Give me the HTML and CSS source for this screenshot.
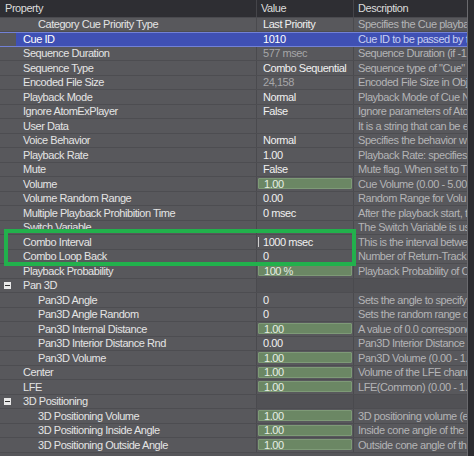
FILE: index.html
```html
<!DOCTYPE html>
<html lang="en">
<head>
    <meta charset="UTF-8">
    <title>Cue Properties</title>
    <link rel="stylesheet" href="styles.css">
</head>
<body>
    <div id="grid">
        <div id="table">
            <!-- Header -->
            <div class="head">
                <div class="h-prop">Property</div>
                <div class="h-val">Value</div>
                <div class="h-desc">Description</div>
            </div>

            <div class="row"><div class="gut"></div><div class="prop sub">Category Cue Priority Type</div><div class="val">Last Priority</div><div class="desc">Specifies the Cue playba</div></div>
            <div class="row sel"><div class="gut"></div><div class="prop">Cue ID</div><div class="val">1010</div><div class="desc">Cue ID to be passed by th</div></div>
            <div class="row"><div class="gut"></div><div class="prop">Sequence Duration</div><div class="val ro">577 msec</div><div class="desc">Sequence Duration (if -1</div></div>
            <div class="row"><div class="gut"></div><div class="prop">Sequence Type</div><div class="val">Combo Sequential</div><div class="desc">Sequence type of "Cue" o</div></div>
            <div class="row"><div class="gut"></div><div class="prop">Encoded File Size</div><div class="val ro">24,158</div><div class="desc">Encoded File Size in Obj</div></div>
            <div class="row"><div class="gut"></div><div class="prop">Playback Mode</div><div class="val">Normal</div><div class="desc">Playback Mode of Cue N</div></div>
            <div class="row"><div class="gut"></div><div class="prop">Ignore AtomExPlayer</div><div class="val">False</div><div class="desc">Ignore parameters of Ato</div></div>
            <div class="row"><div class="gut"></div><div class="prop">User Data</div><div class="val"></div><div class="desc">It is a string that can be e</div></div>
            <div class="row"><div class="gut"></div><div class="prop">Voice Behavior</div><div class="val">Normal</div><div class="desc">Specifies the behavior w</div></div>
            <div class="row"><div class="gut"></div><div class="prop">Playback Rate</div><div class="val">1.00</div><div class="desc">Playback Rate: specifies</div></div>
            <div class="row"><div class="gut"></div><div class="prop">Mute</div><div class="val">False</div><div class="desc">Mute flag. When set to Tr</div></div>
            <div class="row"><div class="gut"></div><div class="prop">Volume</div><div class="val"><span class="bar">1.00</span></div><div class="desc">Cue Volume (0.00 - 5.00</div></div>
            <div class="row"><div class="gut"></div><div class="prop">Volume Random Range</div><div class="val">0.00</div><div class="desc">Random Range for Volu</div></div>
            <div class="row"><div class="gut"></div><div class="prop">Multiple Playback Prohibition Time</div><div class="val">0 msec</div><div class="desc">After the playback start, t</div></div>
            <div class="row"><div class="gut"></div><div class="prop">Switch Variable</div><div class="val"></div><div class="desc">The Switch Variable is us</div></div>
            <div class="row"><div class="gut"></div><div class="prop">Combo Interval</div><div class="val"><span class="caret"></span>1000 msec</div><div class="desc">This is the interval betwe</div></div>
            <div class="row"><div class="gut"></div><div class="prop">Combo Loop Back</div><div class="val">0</div><div class="desc">Number of Return-Track</div></div>
            <div class="row"><div class="gut"></div><div class="prop">Playback Probability</div><div class="val"><span class="bar">100 %</span></div><div class="desc">Playback Probability of C</div></div>
            <div class="row cat"><div class="gut"><span class="minus"></span></div><div class="prop">Pan 3D</div><div class="val"></div><div class="desc"></div></div>
            <div class="row"><div class="gut"></div><div class="prop sub">Pan3D Angle</div><div class="val">0</div><div class="desc">Sets the angle to specify</div></div>
            <div class="row"><div class="gut"></div><div class="prop sub">Pan3D Angle Random</div><div class="val">0</div><div class="desc">Sets the random range o</div></div>
            <div class="row"><div class="gut"></div><div class="prop sub">Pan3D Internal Distance</div><div class="val"><span class="bar">1.00</span></div><div class="desc">A value of 0.0 correspond</div></div>
            <div class="row"><div class="gut"></div><div class="prop sub">Pan3D Interior Distance Rnd</div><div class="val">0.00</div><div class="desc">Pan3D Interior Distance</div></div>
            <div class="row"><div class="gut"></div><div class="prop sub">Pan3D Volume</div><div class="val"><span class="bar">1.00</span></div><div class="desc">Pan3D Volume (0.00 - 1.</div></div>
            <div class="row"><div class="gut"></div><div class="prop">Center</div><div class="val"><span class="bar">1.00</span></div><div class="desc">Volume of the LFE chann</div></div>
            <div class="row"><div class="gut"></div><div class="prop">LFE</div><div class="val"><span class="bar">1.00</span></div><div class="desc">LFE(Common) (0.00 - 1.</div></div>
            <div class="row cat"><div class="gut"><span class="minus"></span></div><div class="prop">3D Positioning</div><div class="val"></div><div class="desc"></div></div>
            <div class="row"><div class="gut"></div><div class="prop sub">3D Positioning Volume</div><div class="val"><span class="bar">1.00</span></div><div class="desc">3D positioning volume (e</div></div>
            <div class="row"><div class="gut"></div><div class="prop sub">3D Positioning Inside Angle</div><div class="val"><span class="bar">1.00</span></div><div class="desc">Inside cone angle of the</div></div>
            <div class="row"><div class="gut"></div><div class="prop sub">3D Positioning Outside Angle</div><div class="val"><span class="bar">1.00</span></div><div class="desc">Outside cone angle of th</div></div>
        </div>
        <!-- Scrollbar -->
        <div class="scroll"></div>

        <!-- Highlight box around combo rows -->
        <div class="mark"></div>
    </div>
</body>
</html>
```

FILE: styles.css
```css
/* Page */
body{
    margin: 0;
    background-color: #56565a;
    font-family: "Liberation Sans", Arial, sans-serif;
    font-size: 11px;
    letter-spacing: -0.45px;
    color: #e4e4e4;
}
#grid{
    position: relative;
    width: 474px;
    height: 456px;
    overflow: hidden;
    display: flex;
}
#table{
    width: 467px;
    display: flex;
    flex-direction: column;
}

/* Header */
.head{
    height: 17.5px;
    flex-shrink: 0;
    display: grid;
    grid-template-columns: 256px 97px 1fr;
    background-color: #2e2e33;
    color: #dcdcdc;
    border-bottom: 1px solid #4a4a4f;
    box-sizing: border-box;
}
.head div{
    display: flex;
    align-items: center;
    white-space: nowrap;
    overflow: hidden;
}
.h-prop{
    padding-left: 5px;
}
.h-val,
.h-desc{
    padding-left: 4px;
    border-left: 1px solid #45454a;
}

/* Rows */
.row{
    height: 14.5px;
    flex-shrink: 0;
    display: grid;
    grid-template-columns: 16px 240px 97px 1fr;
    border-bottom: 1px solid #4d4d51;
    box-sizing: border-box;
    background-color: #58585c;
}
.row div{
    display: flex;
    align-items: center;
    white-space: nowrap;
    overflow: hidden;
}
.prop{
    padding-left: 7px;
}
.prop.sub{
    padding-left: 22px;
}
.val{
    padding-left: 6px;
    border-left: 1px solid #4a4a4e;
    color: #f0f0f0;
}
.val.ro{
    color: #a6a6a8;
}
.desc{
    padding-left: 4px;
    border-left: 1px solid #4a4a4e;
    color: #b4b4b6;
}

/* Selected row */
.sel{
    border-top: 1px solid #7281d6;
    border-bottom: 1px solid #7281d6;
}
.sel .prop,
.sel .val,
.sel .desc{
    background-color: #3f50b4;
    color: #ffffff;
    border-left-color: #3f50b4;
}
.sel .desc{
    color: #c8cff2;
}

/* Category rows */
.cat .val,
.cat .desc{
    background-color: #515155;
}
.gut{
    justify-content: center;
}
.minus{
    width: 7px;
    height: 7px;
    background-color: #e8e8e8;
    position: relative;
    margin-left: -2px;
}
.minus::after{
    content: '';
    position: absolute;
    left: 1px;
    right: 1px;
    top: 3px;
    height: 1px;
    background-color: #333;
}

/* Slider values */
.val .bar{
    margin-left: -5px;
    width: 94px;
    height: 11px;
    padding-left: 5px;
    box-sizing: border-box;
    background-color: #6b8764;
    border: 1px solid #7e9a77;
    border-radius: 1px;
    color: #e6eee4;
    display: flex;
    align-items: center;
}
.caret{
    width: 1px;
    height: 10px;
    background-color: #cfcfcf;
    margin-left: -5px;
    margin-right: 4px;
}

/* Scrollbar */
.scroll{
    width: 7px;
    background-color: #2c2c30;
    border-left: 1px solid #6a6a6e;
    box-sizing: border-box;
}

/* Green annotation */
.mark{
    position: absolute;
    left: 4px;
    top: 229px;
    width: 352px;
    height: 37px;
    border: 4px solid #22b14c;
    box-sizing: border-box;
}
```
